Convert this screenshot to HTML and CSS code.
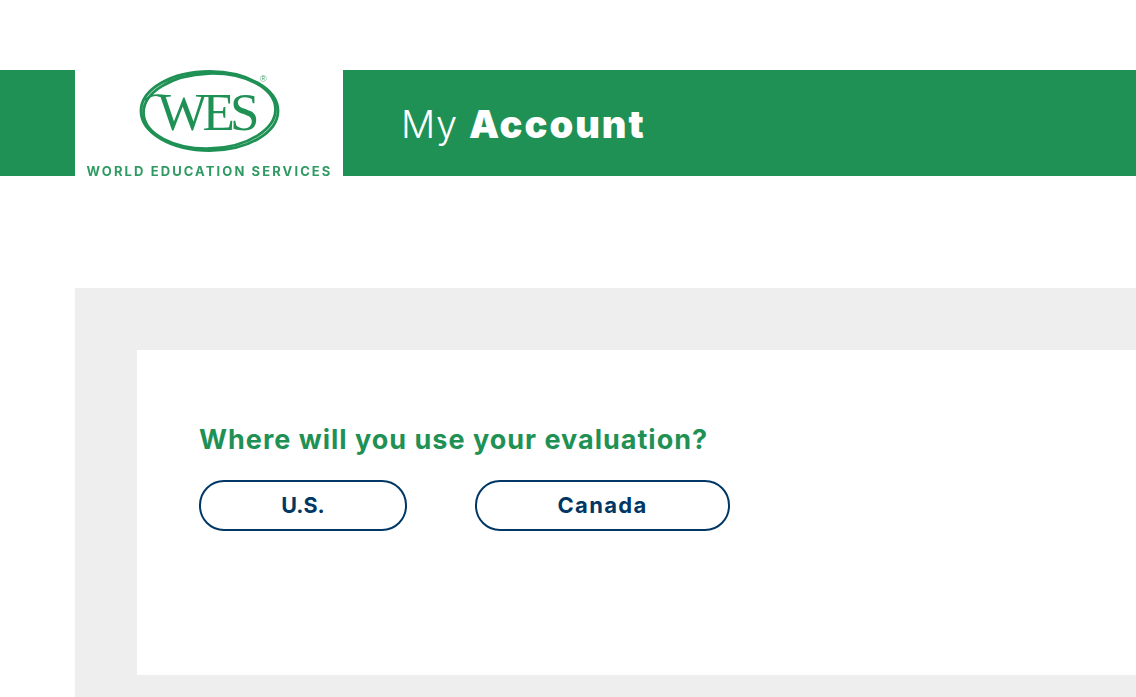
FILE: index.html
```html
<!DOCTYPE html>
<html lang="en">
<head>
<meta charset="utf-8">
<title>My Account</title>
<link rel="stylesheet" href="styles.css">
</head>
<body>
<header class="banner">
  <div class="logo">
    <svg class="logo-mark" width="150" height="84" viewBox="0 0 150 84" aria-label="WES">
      <ellipse class="ring" cx="75.5" cy="41" rx="68.5" ry="39.5"/>
      <ellipse class="ring-thick" cx="75.5" cy="41" rx="66" ry="37.5" transform="rotate(-2 75.5 41)"/>
      <path class="ring-in" d="M11 30C15 25 22 24 32 26"/>
      <text class="wes" x="72" y="60" text-anchor="middle">WES</text>
      <text class="reg" x="126" y="12">®</text>
    </svg>
    <div class="logo-name">WORLD EDUCATION SERVICES</div>
  </div>
  <h1 class="title">My <b>Account</b></h1>
</header>
<main class="panel">
  <section class="card">
    <h2 class="question">Where will you use your evaluation?</h2>
    <div class="choices">
      <button class="choice choice-us" type="button">U.S.</button>
      <button class="choice choice-ca" type="button">Canada</button>
    </div>
  </section>
</main>
</body>
</html>
```
FILE: styles.css
```css
html, body { margin: 0; padding: 0; background: #fff; }
body { height: 697px; overflow: hidden; font-family: Inter, "Open Sans", sans-serif; }
.banner { display: flex; align-items: center; height: 106px; margin-top: 70px; padding-left: 75px; background: #1f9155; }
.logo { flex: none; display: flex; flex-direction: column; align-items: center; width: 268px; height: 106px; background: #fff; }
.logo-mark { display: block; flex: none; height: 84px; margin-bottom: 11px; filter: blur(0.35px); }
.ring { fill: none; stroke: #1f9155; stroke-width: 2.8; }
.ring-thick { fill: none; stroke: #1f9155; stroke-width: 2.8; }
.ring-in { fill: none; stroke: #1f9155; stroke-width: 1.8; }
.wes { font-family: "Liberation Serif", serif; font-size: 53px; fill: #1f9155; letter-spacing: -5px; }
.reg { font-family: "Liberation Sans", sans-serif; font-size: 9px; fill: #4fa578; }
.logo-name { margin-left: 1px; font-size: 13px; line-height: 12px; font-weight: 700; letter-spacing: 2.1px; color: #2f9a62; white-space: nowrap; filter: blur(0.25px); }
.title { margin: 2px 0 0 58px; font-size: 38px; line-height: 44px; font-weight: 300; color: #fff; letter-spacing: 0.6px; }
.title b { font-weight: 900; letter-spacing: 2px; }
.panel { margin: 112px 0 0 75px; padding: 62px 0 30px 62px; background: #eee; }
.card { height: 325px; box-sizing: border-box; padding: 72px 0 0 62px; background: #fff; }
.question { margin: 0 0 22px; font-size: 27px; line-height: 36px; font-weight: 700; color: #1f9155; letter-spacing: 1px; white-space: nowrap; }
.choices { display: flex; gap: 68px; }
.choice { height: 51px; padding: 0 0 2px; box-sizing: border-box; background: #fff; border: 2px solid #003764; border-radius: 25px; font-family: inherit; font-size: 22px; font-weight: 700; color: #003764; }
.choice-us { width: 208px; font-size: 21.5px; }
.choice-ca { width: 255px; letter-spacing: 1.3px; }
```
